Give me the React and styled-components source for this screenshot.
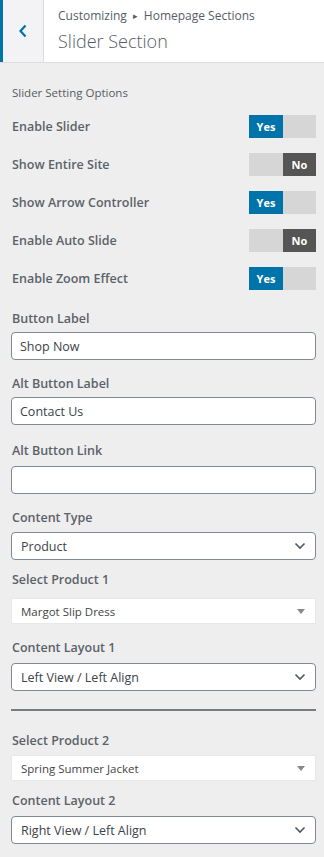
import React from "react";
import styled, { createGlobalStyle } from "styled-components";

const GlobalStyle = createGlobalStyle`
  html, body {
    margin: 0;
    padding: 0;
    background: #eeeeee;
  }
  body {
    font-family: "Open Sans", "Noto Sans", sans-serif;
    color: #555d66;
  }
`;

const Panel = styled.div`
  width: 324px;
  min-height: 857px;
  background: #eeeeee;
`;

const Header = styled.div`
  display: flex;
  height: 62px;
  background: #fff;
  border-bottom: 1px solid #dddddd;
`;

const BackButton = styled.button`
  width: 44px;
  flex-shrink: 0;
  border: none;
  border-left: 3px solid #0073aa;
  border-right: 1px solid #dddddd;
  background: #f3f3f5;
  display: flex;
  align-items: center;
  justify-content: center;
  padding: 0;
  color: #0073aa;
`;

const HeaderText = styled.div`
  display: flex;
  flex-direction: column;
  padding: 6px 0 0 14px;
`;

const Crumb = styled.span`
  font-size: 12px;
  line-height: 20px;
  color: #555d66;
`;

const Arrow = styled.span`
  font-size: 9px;
  margin: 0 6px;
  position: relative;
  top: -1px;
`;

const Title = styled.h2`
  margin: 0;
  font-size: 18px;
  font-weight: 300;
  line-height: 28px;
  color: #555d66;
`;

const Content = styled.div`
  padding: 21px 8px 20px 11px;
  display: flex;
  flex-direction: column;
`;

const SectionHeading = styled.div`
  font-size: 11.5px;
  line-height: 18px;
  margin-bottom: 13px;
  padding-left: 1px;
`;

const ToggleList = styled.div`
  display: flex;
  flex-direction: column;
  gap: 15px;
  margin-bottom: 19px;
`;

const ToggleRow = styled.div`
  display: flex;
  align-items: center;
  justify-content: space-between;
  height: 23px;
`;

const Label = styled.div`
  font-size: 12.5px;
  font-weight: 600;
  line-height: 20px;
  color: #5b626a;
  padding-left: 1px;
`;

const Switch = styled.div`
  display: flex;
  width: 67px;
  height: 23px;
  background: #d6d6d6;
  justify-content: ${(p) => (p.on ? "flex-start" : "flex-end")};
`;

const Knob = styled.span`
  width: ${(p) => (p.on ? 34 : 33)}px;
  background: ${(p) => (p.on ? "#0073aa" : "#555555")};
  color: #fff;
  font-size: 11px;
  font-weight: 700;
  display: flex;
  align-items: center;
  justify-content: center;
`;

const Control = styled.div`
  display: flex;
  flex-direction: column;
  gap: ${(p) => p.gap || 3}px;
  margin-bottom: ${(p) => p.after || 14}px;
`;

const TextInput = styled.div`
  box-sizing: border-box;
  height: 28px;
  background: #fff;
  border: 1px solid #7e8993;
  border-radius: 4px;
  padding: 0 8px;
  font-size: 12.5px;
  display: flex;
  align-items: center;
  color: #3c434a;
`;

const Select = styled(TextInput)`
  justify-content: space-between;
  padding: 0 9px 0 9px;
`;

const Select2 = styled.div`
  box-sizing: border-box;
  height: 26px;
  background: #fff;
  border: 1px solid #e8e8e8;
  display: flex;
  align-items: center;
  justify-content: space-between;
  padding: 0 9px 0 9px;
  font-size: 11.5px;
  color: #444;
`;

const Triangle = styled.span`
  width: 0;
  height: 0;
  border-left: 4px solid transparent;
  border-right: 4px solid transparent;
  border-top: 5px solid #888;
  margin-right: 1px;
`;

const Divider = styled.hr`
  margin: 4px 0 20px;
  border: none;
  height: 2px;
  background: #787c82;
`;

const Chevron = () => (
  <svg width="12" height="8" viewBox="0 0 12 8" fill="none">
    <path d="M1.5 1.5 L6 6 L10.5 1.5" stroke="#50575e" strokeWidth="1.6" />
  </svg>
);

const BackIcon = () => (
  <svg width="10" height="14" viewBox="0 0 10 14" fill="none">
    <path d="M7.5 1.5 L2.5 7 L7.5 12.5" stroke="#0073aa" strokeWidth="2.2" />
  </svg>
);

const toggles = [
  ["Enable Slider", true],
  ["Show Entire Site", false],
  ["Show Arrow Controller", true],
  ["Enable Auto Slide", false],
  ["Enable Zoom Effect", true],
];

export default function App() {
  return (
    <Panel>
      <GlobalStyle />
      <Header>
        <BackButton>
          <BackIcon />
        </BackButton>
        <HeaderText>
          <Crumb>
            Customizing<Arrow>▸</Arrow>Homepage Sections
          </Crumb>
          <Title>Slider Section</Title>
        </HeaderText>
      </Header>
      <Content>
        <SectionHeading>Slider Setting Options</SectionHeading>
        <ToggleList>
          {toggles.map(([label, on]) => (
            <ToggleRow key={label}>
              <Label>{label}</Label>
              <Switch on={on}>
                <Knob on={on}>{on ? "Yes" : "No"}</Knob>
              </Switch>
            </ToggleRow>
          ))}
        </ToggleList>

        <Control after={14}>
          <Label>Button Label</Label>
          <TextInput>Shop Now</TextInput>
        </Control>
        <Control after={16}>
          <Label>Alt Button Label</Label>
          <TextInput>Contact Us</TextInput>
        </Control>
        <Control gap={5} after={14}>
          <Label>Alt Button Link</Label>
          <TextInput />
        </Control>
        <Control gap={4} after={10}>
          <Label>Content Type</Label>
          <Select>
            Product
            <Chevron />
          </Select>
        </Control>
        <Control gap={8} after={14}>
          <Label>Select Product 1</Label>
          <Select2>
            Margot Slip Dress
            <Triangle />
          </Select2>
        </Control>
        <Control gap={5} after={14}>
          <Label>Content Layout 1</Label>
          <Select>
            Left View / Left Align
            <Chevron />
          </Select>
        </Control>
        <Divider />
        <Control gap={4} after={10}>
          <Label>Select Product 2</Label>
          <Select2>
            Spring Summer Jacket
            <Triangle />
          </Select2>
        </Control>
        <Control gap={5} after={0}>
          <Label>Content Layout 2</Label>
          <Select>
            Right View / Left Align
            <Chevron />
          </Select>
        </Control>
      </Content>
    </Panel>
  );
}
